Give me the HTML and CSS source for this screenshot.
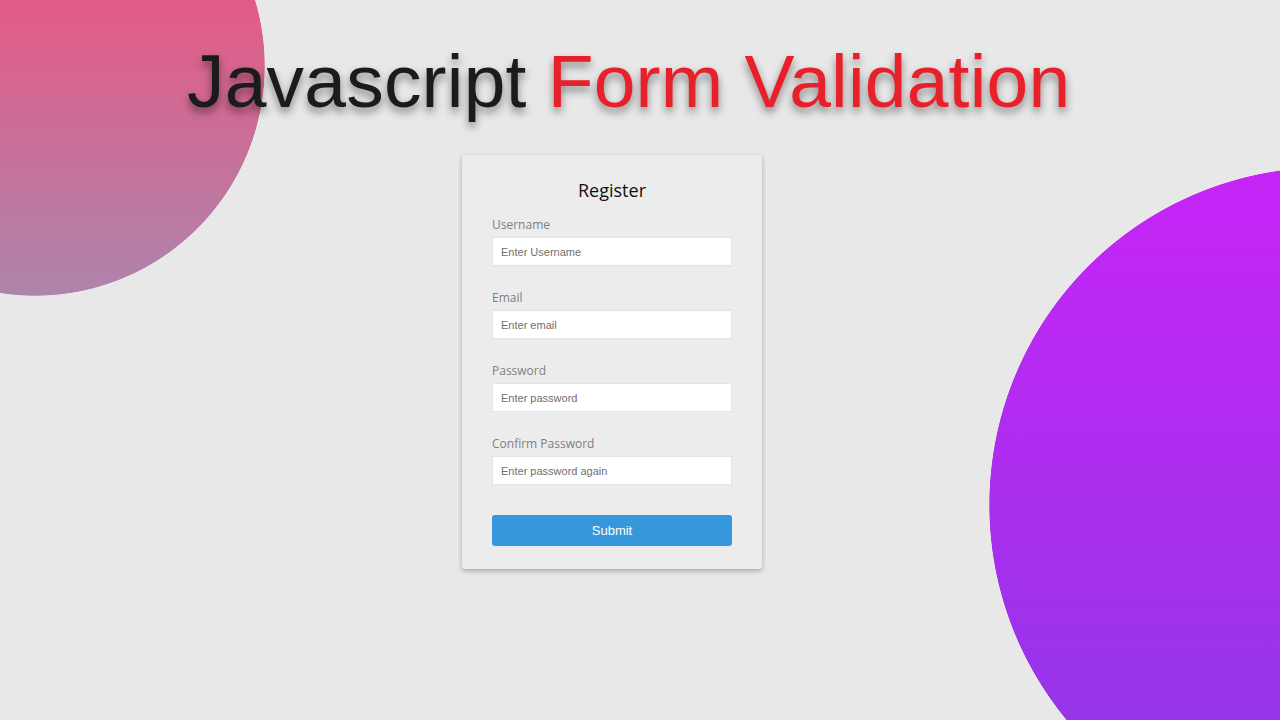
FILE: index.html
```html
<!DOCTYPE html>
<html lang="en">
<head>
<meta charset="utf-8">
<title>Javascript Form Validation</title>
<link rel="stylesheet" href="styles.css">
</head>
<body>
<div class="blob blob-left"></div>
<div class="blob blob-right"></div>
<main class="page">
  <h1 class="title"><span class="dark">Javascript</span> <span class="red">Form Validation</span></h1>
  <form class="card" onsubmit="return false">
    <h2 class="card-title">Register</h2>
    <div class="field">
      <label for="username">Username</label>
      <input id="username" type="text" placeholder="Enter Username">
    </div>
    <div class="field">
      <label for="email">Email</label>
      <input id="email" type="text" placeholder="Enter email">
    </div>
    <div class="field">
      <label for="password">Password</label>
      <input id="password" type="password" placeholder="Enter password">
    </div>
    <div class="field last">
      <label for="password2">Confirm Password</label>
      <input id="password2" type="password" placeholder="Enter password again">
    </div>
    <button class="submit" type="submit">Submit</button>
  </form>
</main>
</body>
</html>
```
FILE: styles.css
```css
html, body {
  margin: 0;
  padding: 0;
}
body {
  width: 1280px;
  height: 720px;
  overflow: hidden;
  background: #e8e8e8;
  position: relative;
  font-family: "Open Sans", "Liberation Sans", sans-serif;
}
.blob {
  position: absolute;
  z-index: 0;
}
.blob-left {
  left: 0;
  top: 0;
  width: 266px;
  height: 297px;
  background: linear-gradient(to bottom, #e35b86 0%, #ad85ac 100%);
  -webkit-mask-image: radial-gradient(circle 230px at 35px 66px, #000 229.3px, transparent 230px);
  mask-image: radial-gradient(circle 230px at 35px 66px, #000 229.3px, transparent 230px);
}
.blob-right {
  left: 989px;
  top: 167px;
  width: 291px;
  height: 553px;
  background: linear-gradient(to bottom, #c724f7 0%, #9635e8 100%);
  -webkit-mask-image: radial-gradient(circle 338px at 338px 338px, #000 337.3px, transparent 338px);
  mask-image: radial-gradient(circle 338px at 338px 338px, #000 337.3px, transparent 338px);
}
.page {
  position: relative;
  z-index: 1;
  display: flex;
  flex-direction: column;
  padding-top: 44px;
}
.title {
  margin: 0;
  padding-left: 187px;
  font-family: "Liberation Sans", Arial, sans-serif;
  font-weight: normal;
  font-size: 75px;
  line-height: 75px;
  letter-spacing: 0.2px;
  white-space: nowrap;
  text-shadow: 0 5px 8px rgba(0, 0, 0, 0.45);
}
.dark { color: #1b1b1b; }
.red { color: #e8202a; }
.card {
  margin: 36px 0 0 462px;
  width: 300px;
  box-sizing: border-box;
  padding: 23px 30px 23px;
  background: #ececec;
  border-radius: 3px;
  box-shadow: 0 2px 5px rgba(0, 0, 0, 0.28);
  display: flex;
  flex-direction: column;
}
.card-title {
  margin: 0 0 14px;
  text-align: center;
  font-weight: normal;
  font-size: 18px;
  line-height: 24px;
  color: #111;
}
.field {
  display: flex;
  flex-direction: column;
  margin-bottom: 23px;
}
.field.last {
  margin-bottom: 30px;
}
.field label {
  font-size: 12px;
  line-height: 18px;
  color: #7f7f7f;
  margin-bottom: 3px;
}
.field input {
  height: 29px;
  box-sizing: border-box;
  width: 100%;
  border: 1px solid #e4e4e4;
  background: #fff;
  padding: 0 8px;
  font-family: "Liberation Sans", Arial, sans-serif;
  font-size: 11px;
  color: #333;
  outline: none;
}
.field input::placeholder {
  color: #6f6f6f;
}
.submit {
  height: 31px;
  border: none;
  border-radius: 3px;
  background: #3498db;
  color: #fff;
  font-family: "Liberation Sans", Arial, sans-serif;
  font-size: 13px;
  cursor: pointer;
  padding: 0;
}
```
